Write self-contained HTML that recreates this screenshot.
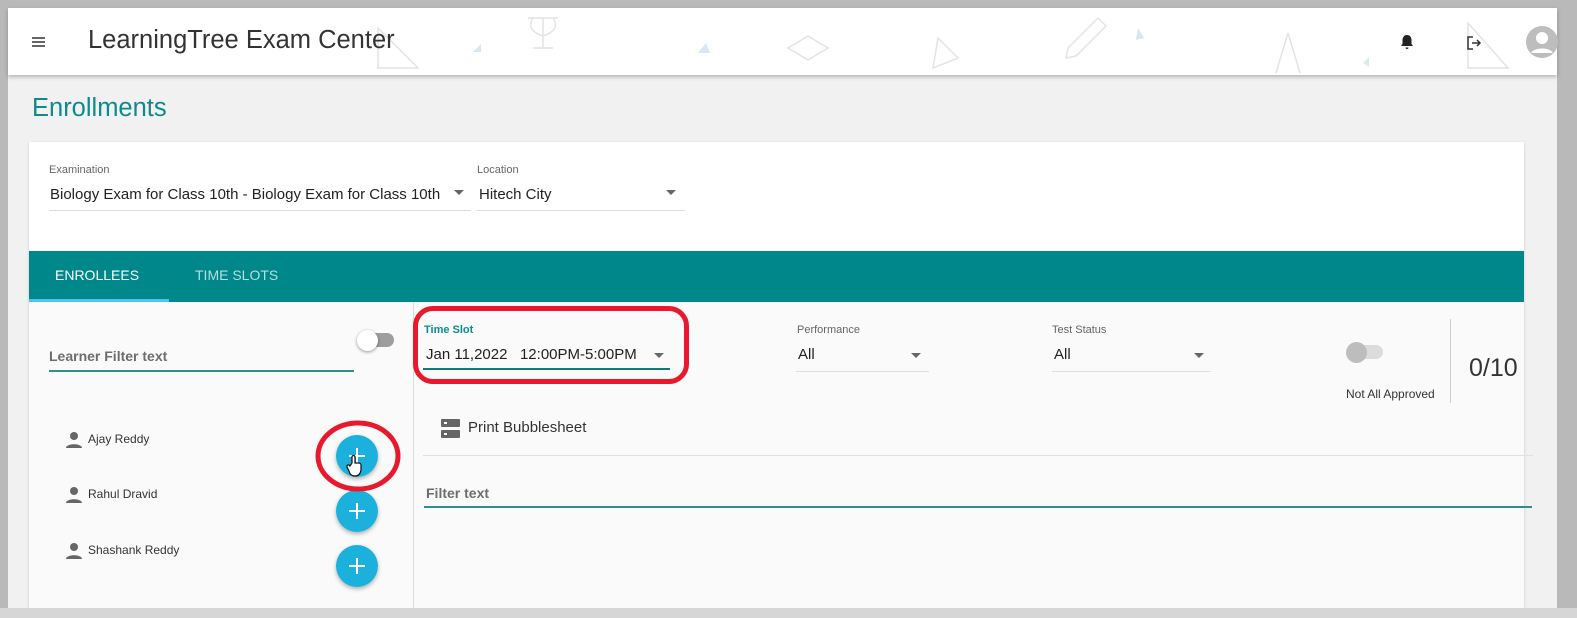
<!DOCTYPE html>
<html><head><style>
*{margin:0;padding:0;box-sizing:border-box}
body{width:1577px;height:618px;background:#b9b9b9;font-family:"Liberation Sans",sans-serif;position:relative;overflow:hidden}
.a{position:absolute}
.t{position:absolute;white-space:nowrap}
</style></head><body>
<div class="a" style="left:8px;top:8px;width:1549px;height:600px;background:#f1f1f1"></div>
<div class="a" style="left:8px;top:8px;width:1549px;height:67px;background:#fff;box-shadow:0 2px 4px rgba(0,0,0,.25)"></div>
<svg class="a" style="left:8px;top:8px" width="1549" height="67" fill="none" stroke="#e4e4e4" stroke-width="1.5">
<path d="M520 10h30M535 10v30M525 40h20M525 10q-8 12 10 18q18-6 10-18"/>
<path d="M370 20l40 40h-40z"/><path d="M780 40l20-12 20 12-20 12z"/>
<path d="M930 30l20 20-25 10z"/><path d="M1060 40l30-30 8 8-30 30-10 2z"/>
<path d="M1280 25l-12 40M1280 25l12 40"/><path d="M1460 15v45h40z"/>
<path d="M465 44l8-8v8z" fill="#d6e6f4" stroke="none"/><path d="M690 45l8-10 4 10z" fill="#d6e6f4" stroke="none"/>
<path d="M1130 20l6 10-8 2z" fill="#d6e6f4" stroke="none"/><path d="M1355 55l6-6 0 10z" fill="#d8ece8" stroke="none"/>
</svg>
<svg class="a" style="left:31px;top:36px" width="16" height="12"><path d="M1 2h13M1 6h13M1 10h13" stroke="#333" stroke-width="1.6"/></svg>
<div class="t" style="left:88px;top:26px;font-size:25.5px;color:#333">LearningTree Exam Center</div>
<svg class="a" style="left:1400px;top:34px" width="14" height="16"><path d="M7 1c-3 0-4.5 2.5-4.5 5v4L1 12h12l-1.5-2V6C11.5 3.5 10 1 7 1z M5.5 13.5h3a1.5 1.5 0 0 1-3 0z" fill="#222"/></svg>
<svg class="a" style="left:1466px;top:35px" width="16" height="16" fill="none" stroke="#333" stroke-width="1.5"><path d="M7 2H2v12h5M6 8h8M11 5l3 3-3 3"/></svg>
<svg class="a" style="left:1525px;top:25px" width="34" height="34"><circle cx="17" cy="17" r="16" fill="#bdbdbd"/><circle cx="17" cy="13" r="6" fill="#fff"/><path d="M6 28c3-6 19-6 22 0" fill="#fff"/></svg>
<div class="t" style="left:32px;top:94px;font-size:25.5px;color:#0f8a8c">Enrollments</div>
<div class="a" style="left:29px;top:142px;width:1495px;height:466px;background:#fff;box-shadow:0 1px 3px rgba(0,0,0,.15)"></div>
<div class="t" style="left:49px;top:164px;font-size:11px;color:#666">Examination</div>
<div class="t" style="left:50px;top:186px;font-size:15px;color:#222">Biology Exam for Class 10th - Biology Exam for Class 10th</div>
<div class="a" style="left:49px;top:210px;width:422px;height:1px;background:#ddd"></div>
<div class="t" style="left:477px;top:164px;font-size:11px;color:#666">Location</div>
<div class="t" style="left:479px;top:186px;font-size:15px;color:#222">Hitech City</div>
<div class="a" style="left:477px;top:210px;width:208px;height:1px;background:#ddd"></div>
<svg class="a" style="left:454px;top:190px" width="240" height="6"><path d="M0 0h10l-5 5z" fill="#666"/><path d="M212 0h10l-5 5z" fill="#666"/></svg>
<div class="a" style="left:29px;top:251px;width:1495px;height:51px;background:#00878a"></div>
<div class="a" style="left:29px;top:299px;width:140px;height:3px;background:#4fc3f7"></div>
<div class="t" style="left:55px;top:267px;font-size:14px;color:#fff">ENROLLEES</div>
<div class="t" style="left:195px;top:267px;font-size:14px;color:#b2dfdf">TIME SLOTS</div>
<div class="a" style="left:29px;top:302px;width:1495px;height:306px;background:#fafafa"></div>
<div class="a" style="left:413px;top:302px;width:1px;height:306px;background:#ddd"></div>
<div class="t" style="left:49px;top:348px;font-size:14px;color:#555;font-weight:bold;opacity:.85">Learner Filter text</div>
<div class="a" style="left:49px;top:370px;width:305px;height:2px;background:#2f8f8f"></div>
<div class="a" style="left:364px;top:333px;width:30px;height:14px;border-radius:7px;background:#9e9e9e"></div>
<div class="a" style="left:357px;top:330px;width:21px;height:21px;border-radius:50%;background:#fff;box-shadow:0 1px 3px rgba(0,0,0,.4)"></div>
<svg class="a" style="left:66px;top:431px" width="18" height="140" fill="#666"><circle cx="8" cy="5" r="4"/><path d="M0 17c0-5 16-5 16 0z"/><circle cx="8" cy="60" r="4"/><path d="M0 72c0-5 16-5 16 0z"/><circle cx="8" cy="116" r="4"/><path d="M0 128c0-5 16-5 16 0z"/></svg>
<div class="t" style="left:88px;top:432px;font-size:12px;color:#333">Ajay Reddy</div>
<div class="t" style="left:88px;top:487px;font-size:12px;color:#333">Rahul Dravid</div>
<div class="t" style="left:88px;top:543px;font-size:12px;color:#333">Shashank Reddy</div>
<svg class="a" style="left:312px;top:419px" width="100" height="175">
<defs><filter id="s"><feDropShadow dx="0" dy="2" stdDeviation="2" flood-opacity=".3"/></filter></defs>
<g filter="url(#s)" fill="#1ab0dc"><circle cx="45" cy="37" r="21"/><circle cx="45" cy="92" r="21"/><circle cx="45" cy="147" r="21"/></g>
<path d="M45 29v16M37 37h16M45 84v16M37 92h16M45 139v16M37 147h16" stroke="#fff" stroke-width="2"/>
<path d="M40 44v-6a1.5 1.5 0 0 1 3 0v6l4 0a2 2 0 0 1 2 2v5q-1 6-6 6q-5 0-6-5l-2-4a1.5 1.5 0 0 1 3-1z" fill="#fff" stroke="#111" stroke-width="1.2"/>
<ellipse cx="46" cy="37" rx="40" ry="33" fill="none" stroke="#e8192c" stroke-width="5"/>
</svg>
<div class="a" style="left:413px;top:306px;width:276px;height:78px;border:5px solid #e8192c;border-radius:20px"></div>
<div class="t" style="left:424px;top:324px;font-size:11px;color:#0f8a8c;font-weight:bold">Time Slot</div>
<div class="t" style="left:426px;top:346px;font-size:15px;color:#222">Jan 11,2022&nbsp;&nbsp;&nbsp;12:00PM-5:00PM</div>
<div class="a" style="left:423px;top:368px;width:247px;height:2px;background:#0f7a7a"></div>
<div class="t" style="left:797px;top:324px;font-size:11px;color:#666">Performance</div>
<div class="t" style="left:798px;top:346px;font-size:15px;color:#222">All</div>
<div class="a" style="left:796px;top:371px;width:133px;height:1px;background:#ddd"></div>
<div class="t" style="left:1052px;top:324px;font-size:11px;color:#666">Test Status</div>
<div class="t" style="left:1054px;top:346px;font-size:15px;color:#222">All</div>
<div class="a" style="left:1052px;top:371px;width:159px;height:1px;background:#ddd"></div>
<svg class="a" style="left:654px;top:353px" width="560" height="6" fill="#666"><path d="M0 0h10l-5 5z"/><path d="M257 0h10l-5 5z"/><path d="M540 0h10l-5 5z"/></svg>
<div class="a" style="left:1352px;top:345px;width:31px;height:14px;border-radius:7px;background:#dcdcdc"></div>
<div class="a" style="left:1346px;top:342px;width:21px;height:21px;border-radius:50%;background:#bdbdbd"></div>
<div class="t" style="left:1346px;top:387px;font-size:12px;color:#333">Not All Approved</div>
<div class="a" style="left:1450px;top:319px;width:1px;height:84px;background:#ccc"></div>
<div class="t" style="left:1469px;top:354px;font-size:25px;color:#333">0/10</div>
<svg class="a" style="left:441px;top:419px" width="19" height="20" fill="#666"><rect x="0" y="0" width="19" height="8" rx="1"/><rect x="0" y="11" width="19" height="8" rx="1"/><rect x="3" y="3" width="3" height="2" fill="#fff"/><rect x="3" y="14" width="3" height="2" fill="#fff"/></svg>
<div class="t" style="left:468px;top:419px;font-size:15px;color:#333">Print Bubblesheet</div>
<div class="a" style="left:423px;top:455px;width:1110px;height:1px;background:#e0e0e0"></div>
<div class="t" style="left:426px;top:485px;font-size:14px;color:#555;font-weight:bold;opacity:.85">Filter text</div>
<div class="a" style="left:424px;top:506px;width:1108px;height:2px;background:#2f8f8f"></div>
<div class="a" style="left:0;top:608px;width:1577px;height:10px;background:#d6d6d6"></div>
</body></html>
